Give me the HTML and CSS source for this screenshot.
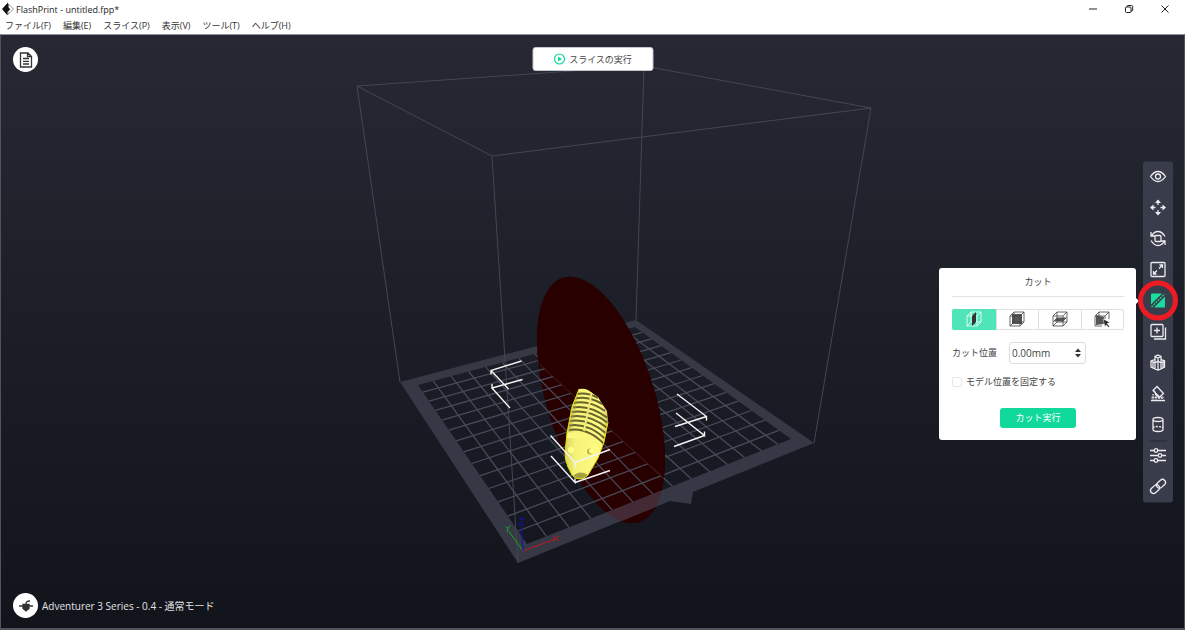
FILE: index.html
```html
<!DOCTYPE html>
<html lang="ja">
<head>
<meta charset="utf-8">
<title>FlashPrint - untitled.fpp*</title>
<link rel="stylesheet" href="styles.css">
</head>
<body>
<div class="app">
  <header class="titlebar">
    <svg class="logo" viewBox="0 0 12 14" aria-hidden="true"><path d="M6.500 2 11.500 7 6 12.500z" fill="#fff" stroke="#777" stroke-width=".8"/><path d="M6 .5 0 7l5.500 6.500V9.800L8.500 7 6.500 6z" fill="#111"/></svg>
    <h1 class="title">FlashPrint - untitled.fpp*</h1>
    <div class="window-buttons">
      <button aria-label="最小化"><svg viewBox="0 0 12 12"><path d="M2 6h8"/></svg></button>
      <button aria-label="元に戻す"><svg viewBox="0 0 12 12"><rect x="2.500" y="4" width="5.500" height="5.500" rx="1"/><path d="M4 4V3.500q0-1 1-1h3.500q1.200 0 1.200 1.200V7q0 1-1 1H8"/></svg></button>
      <button aria-label="閉じる"><svg viewBox="0 0 12 12"><path d="m2.500 2.500 7 7m0-7-7 7"/></svg></button>
    </div>
  </header>
  <nav class="menubar">
    <button>ファイル(F)</button><button>編集(E)</button><button>スライス(P)</button><button>表示(V)</button><button>ツール(T)</button><button>ヘルプ(H)</button>
  </nav>
  <main class="viewport">
    <svg class="scene" viewBox="1 35 1183 593" role="img" aria-label="造形プレート">
      <defs>
        <clipPath id="behind"><path d="M520 346 680 493H720V250H500z"/></clipPath>
        <clipPath id="front-frame"><path d="M518 563 814 443 791 439 527 544z"/></clipPath>
        <clipPath id="body"><path d="M579 389Q584 388 588 390L598 397 601 402 607 411 608 422 604 442 598 458 588 475Q584 479 580 479 575 479 572 475L568 467Q565 460 565 453L567 433 572 407z"/></clipPath>
        <linearGradient id="skin"><stop offset="0" stop-color="#c8c44e"/><stop offset=".3" stop-color="#f6f277"/><stop offset=".8" stop-color="#fffb84"/><stop offset="1" stop-color="#c5c052"/></linearGradient>
      </defs>
      <ellipse class="cut-plane" cx="601" cy="400" rx="54" ry="128" transform="rotate(-17.300 601 400)"/>
      <path class="plate" fill-rule="evenodd" d="M518 563 400 382 636 320 814 443 693 492 691 504 670 501zM527 544 791 439 635 327 418 385z"/>
      <path id="grid" class="grid"/>
      <g clip-path="url(#front-frame)"><ellipse class="cut-tint" cx="601" cy="400" rx="54" ry="128" transform="rotate(-17.300 601 400)"/></g>
      <g clip-path="url(#behind)"><ellipse class="cut-plane" cx="601" cy="400" rx="54" ry="128" transform="rotate(-17.300 601 400)"/></g>
      <path class="cut-edge" d="M536 361 662 477"/>
      <path class="volume" d="M357 86 492 156 871 108 644 66zM357 86 400 382M492 156 518 563M871 108 814 443M644 66 636 320"/>
      <g clip-path="url(#body)">
        <path fill="url(#skin)" d="M560 385h50v100h-50z"/>
        <path class="ribs" d="M576 394q12-2 22 4M575 398.500q14-3 28 6M574 403q15-3 31 8M573 407.500q16-3 34 10M572 412q18-3 36 11M571 416.500q18-3 37 12M570 421q18-3 37 13M569 425.500q19-3 37 14M569 430q19-3 36 15"/>
        <path class="belly" d="M576 390 568 432"/>
        <path class="spine" d="M592 391 584 431"/>
        <path d="M566 433Q583 429 604 447L602 452Q590 437 566 438z" fill="#fbf67e"/>
        <path d="M573 476q5-5 11-3l4 2-4 6h-8z" fill="#a39f42"/>
        <circle cx="571" cy="450" r="3" fill="#ffff8c"/><circle cx="590" cy="451.500" r="3" fill="#b8b350"/><circle cx="591.500" cy="451" r="2.500" fill="#ffff80"/>
      </g>
      <path class="outline" d="M579 389 572 407 567 433 565 453Q565 460 568 467L572 475Q575 479 580 479 584 479 588 475L598 458 604 442 608 422"/>
      <path class="bounds" d="M521.500 361 491 370.500v4M491 370.500 508.500 389M522.500 379.500 492 388v-4M492 388 510 408M677 394 706.500 416.500v4M706.500 416.500 675 426.500M676 413 704.500 435.500v-4M704.500 435.500 674 446.500M550.500 435.500 575 462.500v5M575 462.500 610 449.500M551 456 575 482.500v-4M575 482.500 610 470.500"/>
      <g class="axes"><path stroke="#c4181c" d="M523 551 554 539.500M553 536l6 5m-6 0 6-5"/><path stroke="#16a820" d="M523 551 509 531.500M505.500 526.500l2.500 2 2-3m-2 3-1 4"/><path stroke="#1010b8" d="M523 551 521.500 527M519 518.500h5l-5 6h5"/></g>
    </svg>

    <button class="round-button files" aria-label="ファイルリスト"><svg viewBox="0 0 24 24"><path d="M6.500 5h7.500l3.500 3.500v10.500h-11zM13.500 5V8.500h4M9 10.500h6M9 13.300h6M9 16h6"/></svg></button>
    <button class="slice"><svg viewBox="0 0 12 12"><circle cx="6" cy="6" r="5"/><path d="M4.500 3.500v5L8.500 6z"/></svg><span>スライスの実行</span></button>

    <section class="panel" aria-labelledby="cut-title">
      <h2 id="cut-title">カット</h2>
      <div class="modes">
        <button class="active" aria-label="X 平面"><svg viewBox="0 0 18 18"><path d="M2 6h10v10H2zM2 6l4-4h10v10l-4 4M16 2l-4 4M6 2v10L2 16M6 12h10"/><path class="cut" d="m7 6 4-4v10l-4 4z"/></svg></button>
        <button aria-label="Y 平面"><svg viewBox="0 0 18 18"><path class="cut" d="M4 4h10v10H4z"/><path d="M2 6h10v10H2zM2 6l4-4h10v10l-4 4M16 2l-4 4M6 2v10L2 16M6 12h10"/></svg></button>
        <button aria-label="Z 平面"><svg viewBox="0 0 18 18"><path class="cut" d="m2 11.500 4-4h10l-4 4z"/><path d="M2 6h10v10H2zM2 6l4-4h10v10l-4 4M16 2l-4 4M6 2v10L2 16M6 12h10"/></svg></button>
        <button aria-label="手動"><svg viewBox="0 0 18 18"><path d="M2 6h10v3M2 6v10h7M2 6l4-4h10v7M16 2l-4 4M6 2v4"/><path class="cut" d="m3 5 8 2v7l-8 1z"/><path class="pointer" d="m10 9 7 3.500-3 1 2.500 2.700-1 1-2.500-2.400-1 2.200z"/></svg></button>
      </div>
      <div class="field">
        <label for="cut-position">カット位置</label>
        <span class="spin"><input id="cut-position" type="text" value="0.00mm"><svg viewBox="0 0 6 10" aria-hidden="true"><path d="M0 4 3 .500 6 4zM0 6h6L3 9.500z"/></svg></span>
      </div>
      <label class="check"><input type="checkbox"><span>モデル位置を固定する</span></label>
      <button class="execute">カット実行</button>
    </section>

    <aside class="tools">
      <button aria-label="表示"><svg viewBox="0 0 18 18"><path d="M1.500 9Q5 4 9 4t7.500 5Q13 14 9 14T1.500 9z"/><circle cx="9" cy="9" r="2.500"/></svg></button>
      <button aria-label="移動"><svg viewBox="0 0 18 18"><path d="M9 2v4.500M9 11.500v4.500M2 9h4.500M11.500 9h4.500"/><path class="solid" d="m9 1 3 3.500H6zM9 17l3-3.500H6zM1 9l3.500-3v6zM17 9l-3.500-3v6z"/></svg></button>
      <button aria-label="回転"><svg viewBox="0 0 18 18"><rect x="6" y="6" width="6" height="6" rx="1"/><path d="M2 2.500v4h4M2.500 6.500Q5 2 9 2t7 5M16 15.500v-4h-4M15.500 11.500Q13 16 9 16T2 11"/></svg></button>
      <button aria-label="スケール"><svg viewBox="0 0 18 18"><rect x="2" y="2" width="14" height="14" rx="1"/><path d="M10.500 4.500h3v3M13.500 4.500 10 8M7.500 13.500h-3v-3M4.500 13.500 8 10"/></svg></button>
      <button class="current" aria-label="カット"><svg viewBox="0 0 18 18"><path class="green" d="M2 3q0-1 1-1h10L2 13zM16 5v10q0 1-1 1H5z"/><path class="dash" d="M2.500 15.500 15.500 2.500"/></svg></button>
      <button aria-label="複製"><svg viewBox="0 0 18 18"><rect x="2" y="2" width="12" height="12" rx="1"/><path d="M8 5v6M5 8h6M16.500 5v11.500H5"/></svg></button>
      <button aria-label="自動配置"><svg viewBox="0 0 18 18"><path d="m9 1.500 3 1.500v3l3.500 1.300v6.200L12 15.500 9 16.500l-3-1-4-2V7.500L6 6V3zM6 3l3 1.500L12 3M9 4.500v12M2 7.500l4 2 3-2 3 2 3.500-2M6 6v9.500M12 6v9.500M4 8.500v6M14 8.500v6"/></svg></button>
      <button aria-label="サポート"><svg viewBox="0 0 18 18"><path d="m4 6 4-4 6.500 7-4 3.500zM4 6q3 1 2.500 4l3.500 2.500M2 16h14"/><path d="M4 9.500v5.500M7 11v4M10 13.500V15M13 12v3M2.500 13h12" stroke-dasharray="1 .6"/></svg></button>
      <button aria-label="円柱"><svg viewBox="0 0 18 18"><path d="M4 4v10q0 2 5 2t5-2V4q0-2-5-2T4 4t5 2 5-2"/><path d="M4 12q2-1 5-1t5 1" stroke-dasharray="2 1"/></svg></button>
      <button class="divided" aria-label="設定"><svg viewBox="0 0 18 18"><path d="M1 4h4M9 4h8M1 9h8M13 9h4M1 14h4M9 14h8"/><circle cx="7" cy="4" r="1.800"/><circle cx="11" cy="9" r="1.800"/><circle cx="7" cy="14" r="1.800"/></svg></button>
      <button aria-label="リンク"><svg viewBox="0 0 18 18"><g transform="rotate(-42 9 9)"><rect x="0" y="6" width="10" height="6" rx="3"/><rect x="8" y="6" width="10" height="6" rx="3"/></g></svg></button>
    </aside>

    <footer class="printer">
      <button class="round-button" aria-label="プリンター"><svg viewBox="0 0 24 24"><path class="nozzle" d="M9 10.500h6v4L12 17l-3-2.500z"/><path d="M5 12h14M12 10q-.5-3 4-3"/></svg></button>
      <span>Adventurer 3 Series - 0.4 - 通常モード</span>
    </footer>
  </main>
</div>
<script src="grid.js"></script>
</body>
</html>
```
FILE: styles.css
```css
*, *::before, *::after { box-sizing: border-box; }
body { margin: 0; font-family: "Open Sans", "Noto Sans CJK JP", sans-serif; font-size: 9px; color: #444; }
button { border: 0; padding: 0; background: none; font: inherit; color: inherit; }
svg { display: block; fill: none; }
.app { display: flex; flex-direction: column; height: 100vh; background: #fff; }
.titlebar { display: flex; align-items: center; height: 18px; padding-left: 2px; }
.logo { width: 12px; height: 14px; }
.title { margin: 0 auto 0 2px; font-size: 9px; font-weight: 400; color: #222; }
.window-buttons { display: flex; padding-right: 2px; }
.window-buttons button { display: grid; place-items: center; width: 36px; height: 18px; }
.window-buttons svg { width: 12px; height: 12px; stroke: #222; stroke-width: 1; }
.menubar { display: flex; gap: 12px; height: 16px; padding-left: 5px; line-height: 16px; color: #333; }

.viewport { position: relative; flex: 1; min-height: 0; overflow: hidden; background: linear-gradient(#262833, #11141b); border: 1px solid #50535c; border-top-color: #93959a; border-bottom-width: 2px; }
.scene { width: 100%; height: 100%; }
.plate { fill: #363846; }
.grid { stroke: #494a59; stroke-width: 1.3; }
.volume { stroke: #444653; stroke-width: 1; }
.cut-plane { fill: #280000; }
.cut-tint { fill: #432a35; }
.cut-edge { stroke: #3b2027; stroke-width: 1; }
.ribs { stroke: #67632d; stroke-width: 2; }
.spine { stroke: #eee96f; stroke-width: 2; }
.belly { stroke: #aaa545; stroke-width: 6; opacity: .4; }
.outline { stroke: #e5e000; stroke-width: 1; }
.bounds { stroke: #f4f4f4; stroke-width: 1.4; }
.axes { stroke-width: 1; }

.round-button { display: grid; place-items: center; flex: none; width: 25px; height: 25px; border-radius: 50%; background: #fff; }
.round-button svg { width: 24px; height: 24px; stroke: #333; stroke-width: 1.3; }
.round-button .nozzle { fill: #2d3040; }
.files { position: absolute; left: 12px; top: 12px; }
.slice { position: absolute; left: 50%; top: 12px; transform: translateX(-50%); display: flex; align-items: center; justify-content: center; gap: 4px; width: 121px; height: 24px; border: 1px solid #c5c6ca; border-radius: 3px; background: #fff; }
.slice svg { width: 12px; height: 12px; fill: #10d99b; }
.slice circle { fill: none; stroke: #10d99b; stroke-width: 1.2; }

.panel { position: absolute; right: 48px; top: calc(50% - 64px); display: flex; flex-direction: column; width: 197px; padding: 0 12px 12px 13px; border-radius: 3px; background: #fff; }
.panel::after { content: ""; position: absolute; right: -3px; top: 29px; border: 4px solid transparent; border-left-color: #fff; border-right: 0; }
.panel h2 { margin: 0; height: 29px; border-bottom: 1px solid #e2e2e2; font-size: 9px; line-height: 28px; font-weight: 400; text-align: center; }
.modes { display: grid; grid-template-columns: repeat(4, 1fr); height: 21px; margin-top: 12px; border: 1px solid #e0e0e0; border-radius: 2px; }
.modes button { display: grid; place-items: center; border-left: 1px solid #e0e0e0; }
.modes .active { margin: -1px 0 -1px -1px; border: 0; border-radius: 2px 0 0 2px; background: #4fe5b8; }
.modes svg { width: 18px; height: 18px; stroke: #444; stroke-width: .8; }
.modes .active svg { stroke: #fff; }
.modes .cut { fill: #555; stroke: none; }
.modes .active .cut { fill: #333; }
.modes .pointer { fill: #222; stroke: #fff; stroke-width: .5; }
.field { display: flex; align-items: center; gap: 12px; margin-top: 12px; }
.spin { display: flex; align-items: center; width: 77px; height: 22px; padding-right: 4px; border: 1px solid #dedede; border-radius: 3px; }
.spin input { flex: 1; min-width: 0; border: 0; padding: 0 2px; outline: 0; font: 10px "Open Sans", sans-serif; color: #444; background: none; }
.spin svg { width: 6px; height: 10px; fill: #333; }
.check { display: flex; align-items: center; gap: 4px; height: 14px; margin-top: 11px; }
.check input { appearance: none; width: 10px; height: 10px; margin: 0; border: 1px solid #e6e6e6; border-radius: 2px; }
.execute { align-self: center; width: 76px; height: 20px; margin-top: 19px; border-radius: 3px; background: #10d99b; color: #fff; }

.tools { position: absolute; right: 11px; top: 50%; transform: translateY(-50%); display: flex; flex-direction: column; width: 30px; border-radius: 3px; background: #393d4b; }
.tools button { position: relative; display: grid; place-items: center; height: 31px; }
.tools svg { width: 18px; height: 18px; stroke: #ececee; stroke-width: 1.3; }
.tools .solid { fill: #ececee; stroke: none; }
.tools .green { fill: #1bdc9f; stroke: none; }
.tools .dash { stroke: #1bdc9f; stroke-dasharray: 2 1; }
.tools .current { z-index: 1; }
.tools .current::after { content: ""; position: absolute; left: 50%; top: 50%; width: 40px; height: 40px; transform: translate(-50%, -50%); border: 5px solid #ed1c24; border-radius: 50%; }
.tools .divided::before { content: ""; position: absolute; left: 6px; right: 6px; top: 0; border-top: 1px solid #252936; }

.printer { position: absolute; left: 12px; bottom: 10px; display: flex; align-items: center; gap: 4px; font-size: 10px; color: #e2e2e4; }
```
FILE: grid.js
```js
// Projects the build plate's square grid onto its four on-screen corners.
const front = [527, 544], right = [791, 439], back = [635, 327], left = [418, 385];
const dx1 = right[0] - back[0], dx2 = left[0] - back[0], dx3 = front[0] - right[0] + back[0] - left[0];
const dy1 = right[1] - back[1], dy2 = left[1] - back[1], dy3 = front[1] - right[1] + back[1] - left[1];
const det = dx1 * dy2 - dx2 * dy1;
const g = (dx3 * dy2 - dx2 * dy3) / det;
const h = (dx1 * dy3 - dx3 * dy1) / det;

function project(u, v) {
  const w = g * u + h * v + 1;
  return [0, 1].map(k => {
    const a = right[k] - front[k] + g * right[k];
    const b = left[k] - front[k] + h * left[k];
    return ((a * u + b * v + front[k]) / w).toFixed(1);
  }).join(" ");
}

let d = "";
for (let i = -6; i <= 6; i++) {
  const t = 0.5 + i / 13.66;
  d += `M${project(t, 0)}L${project(t, 1)}M${project(0, t)}L${project(1, t)}`;
}
document.getElementById("grid").setAttribute("d", d);
```
